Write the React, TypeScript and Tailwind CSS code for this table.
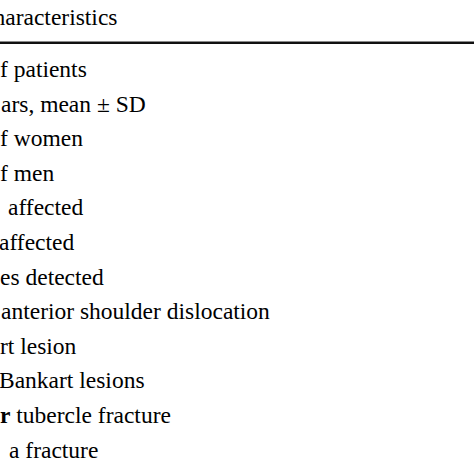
import React from "react";

const rows: { text: React.ReactNode; cls: string }[] = [
  { text: "f patients", cls: "pl-0" },
  { text: "ars, mean ± SD", cls: "pl-[1px]" },
  { text: "f women", cls: "pl-0" },
  { text: "f men", cls: "pl-0" },
  { text: "affected", cls: "pl-[8px]" },
  { text: "affected", cls: "ml-[-1px]" },
  { text: "es detected", cls: "pl-0" },
  { text: "anterior shoulder dislocation", cls: "pl-[1px]" },
  { text: "rt lesion", cls: "pl-0" },
  { text: "Bankart lesions", cls: "ml-[-1px]" },
  {
    text: (
      <>
        <span className="font-bold">r</span> tubercle fracture
      </>
    ),
    cls: "pl-0",
  },
  { text: "a fracture", cls: "pl-[9px]" },
];

export default function App() {
  return (
    <div className="w-[474px] h-[474px] overflow-hidden bg-white text-black font-['Liberation_Serif','Times_New_Roman',serif] text-[23.5px] leading-[34.6px]">
      <div className="whitespace-nowrap ml-[-6.5px]">haracteristics</div>
      <div className="mt-[6.5px] w-full">
        <div className="h-[1px] bg-[#8a8a8a]" />
        <div className="h-[2px] bg-[#111]" />
      </div>
      <div className="mt-[8px] flex flex-col">
        {rows.map((r, i) => (
          <div key={i} className={"whitespace-nowrap " + r.cls}>
            {r.text}
          </div>
        ))}
      </div>
    </div>
  );
}
